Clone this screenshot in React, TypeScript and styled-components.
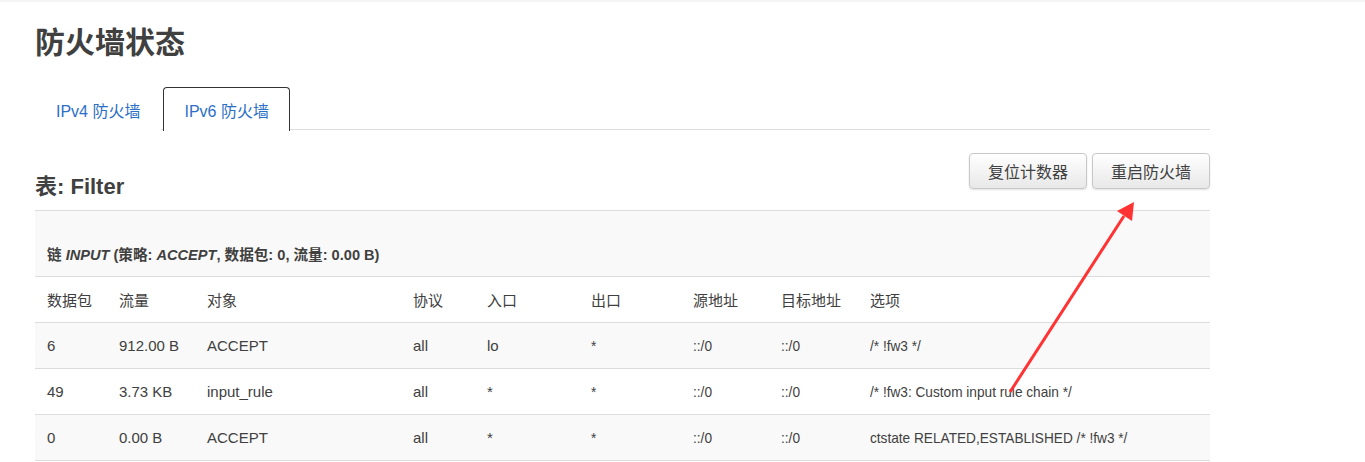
import styled, { createGlobalStyle } from 'styled-components';

const GlobalStyle = createGlobalStyle`
  html, body { margin:0; padding:0; background:#fff; }
  body { font-family:"Liberation Sans", "Noto Sans CJK SC", sans-serif; color:#404040; border-top:2px solid #f4f4f4; }
  * { box-sizing:border-box; }
`;

const Page = styled.div`position:relative; width:1365px; height:460px; overflow:hidden;`;
const Main = styled.div`width:1175px; margin-left:35px; padding-top:23px;`;
const Title = styled.h2`margin:0; font-size:30px; line-height:36px; font-weight:bold; color:#404040;`;
const Tabs = styled.ul`display:flex; gap:2px; list-style:none; margin:26px 0 0; padding:0; border-bottom:1px solid #ddd; height:43px;`;
const Tab = styled.li<{ $active?: boolean }>`
  height:44px; padding:0 20px; display:flex; align-items:center; font-size:16px; color:#2c6fc7;
  border:1px solid ${({ $active }) => ($active ? '#333' : 'transparent')};
  border-bottom:none; border-radius:4px 4px 0 0; background:#fff; margin-bottom:-1px;
`;
const SectionHead = styled.div`display:flex; justify-content:space-between; align-items:flex-end; margin-top:23px; height:57px;`;
const SectionTitle = styled.h3`margin:0 0 10px; font-size:22px; line-height:26px; font-weight:bold; color:#404040;`;
const Actions = styled.div`display:flex; gap:5px; align-self:flex-start;`;
const Btn = styled.button`
  height:36px; padding:0 18px; font-family:inherit; font-size:16px; color:#404040; border:1px solid #c8c8c8; border-radius:4px;
  background:linear-gradient(#ffffff, #e8e8e8); box-shadow:0 1px 2px rgba(0,0,0,.12);
`;
const Table = styled.table`width:100%; border-collapse:collapse; border-top:1px solid #ddd; font-size:15px;`;
const Caption = styled.th`background:#f9f9f9; height:66px; text-align:left; vertical-align:bottom; padding:0 12px 12px; font-size:14.6px; font-weight:bold; border-bottom:1px solid #ddd;`;
const Row = styled.tr<{ $alt?: boolean }>`background:${({ $alt }) => ($alt ? '#f9f9f9' : '#fff')};`;
const Head = styled.td`height:46px; padding:0 12px; border-bottom:1px solid #ddd; text-align:left; font-weight:normal;`;
const Cell = styled.td`height:46px; padding:0 12px; border-bottom:1px solid #ddd;`;
const Narrow = styled.span`display:inline-block; transform:scaleX(.91); transform-origin:left center; white-space:nowrap;`;

const Arrow = styled.svg`position:absolute; left:0; top:0; pointer-events:none;`;

const widths = [72, 88, 206, 74, 104, 102, 88, 89, undefined];
const heads = ['数据包', '流量', '对象', '协议', '入口', '出口', '源地址', '目标地址', '选项'];
const rows = [
  ['6', '912.00 B', 'ACCEPT', 'all', 'lo', '*', '::/0', '::/0', '/* !fw3 */'],
  ['49', '3.73 KB', 'input_rule', 'all', '*', '*', '::/0', '::/0', '/* !fw3: Custom input rule chain */'],
  ['0', '0.00 B', 'ACCEPT', 'all', '*', '*', '::/0', '::/0', 'ctstate RELATED,ESTABLISHED /* !fw3 */'],
];

export default function App() {
  return (
    <Page>
      <GlobalStyle />
      <Main>
        <Title>防火墙状态</Title>
        <Tabs>
          <Tab>IPv4 防火墙</Tab>
          <Tab $active>IPv6 防火墙</Tab>
        </Tabs>
        <SectionHead>
          <SectionTitle>表: Filter</SectionTitle>
          <Actions>
            <Btn>复位计数器</Btn>
            <Btn>重启防火墙</Btn>
          </Actions>
        </SectionHead>
        <Table>
          <colgroup>
            {widths.map((w, i) => <col key={i} style={w ? { width: w } : undefined} />)}
          </colgroup>
          <thead>
            <tr>
              <Caption colSpan={9}>链 <i>INPUT</i> (策略: <i>ACCEPT</i>, 数据包: 0, 流量: 0.00 B)</Caption>
            </tr>
          </thead>
          <tbody>
            <Row>{heads.map((h) => <Head key={h}>{h}</Head>)}</Row>
            {rows.map((r, ri) => (
              <Row key={ri} $alt={ri % 2 === 0}>
                {r.map((c, ci) => (
                  <Cell key={ci}>{ci >= 5 ? <Narrow>{c}</Narrow> : c}</Cell>
                ))}
              </Row>
            ))}
          </tbody>
        </Table>
      </Main>
      <Arrow width="1365" height="462" viewBox="0 0 1365 462">
        <line x1="1010" y1="390" x2="1124" y2="214" stroke="#ff3333" strokeWidth="3" />
        <polygon points="1134,200 1117,209 1132,219" fill="#ff3333" />
      </Arrow>
    </Page>
  );
}
